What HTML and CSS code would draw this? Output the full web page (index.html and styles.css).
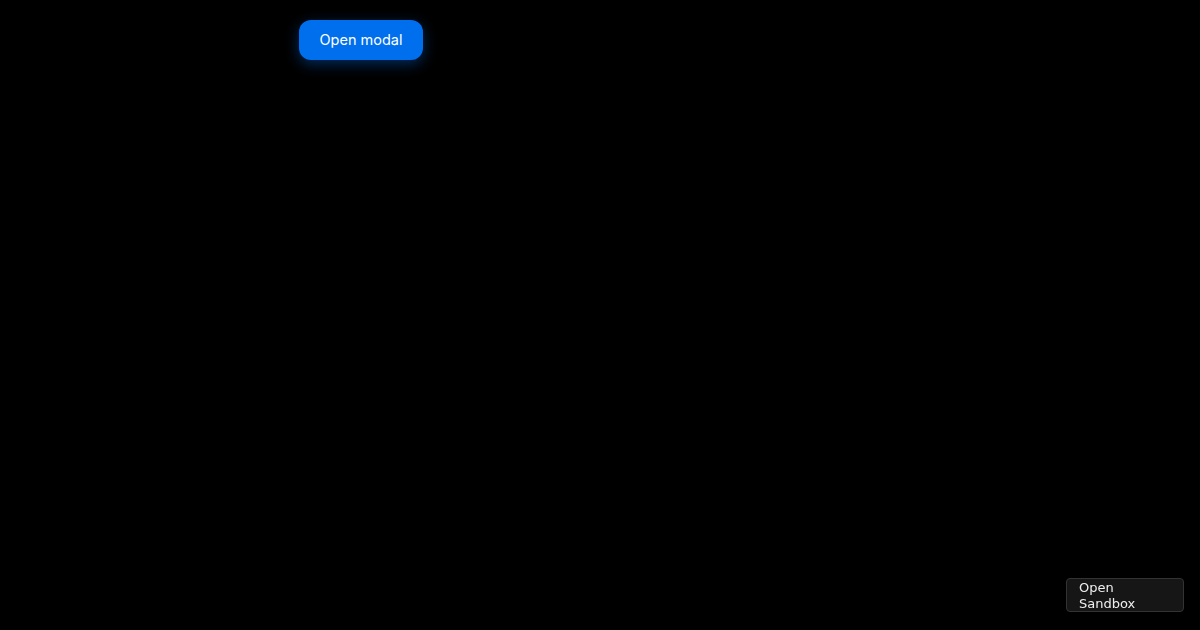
FILE: index.html
```html
<!DOCTYPE html>
<html>
<head>
<meta charset="utf-8">
<link rel="stylesheet" href="styles.css">
</head>
<body>
<main class="page">
  <button class="open-modal">Open modal</button>
</main>
<button class="sandbox">Open Sandbox</button>
</body>
</html>
```
FILE: styles.css
```css
html, body {
  margin: 0;
  padding: 0;
  background: #000;
  height: 100%;
}
.page {
  padding: 20px 0 0 299px;
}
.open-modal {
  width: 124px;
  height: 40px;
  border: none;
  border-radius: 12px;
  background: #006FEE;
  color: #fff;
  font-family: Inter, "Noto Sans", sans-serif;
  font-size: 14.5px;
  padding: 0 0 2px 0;
  box-shadow: 0 4px 14px 0 rgba(0, 111, 238, 0.4);
  cursor: pointer;
}
.sandbox {
  position: fixed;
  right: 16px;
  bottom: 18px;
  width: 118px;
  height: 34px;
  box-sizing: border-box;
  background: #161616;
  border: 1px solid #333;
  border-radius: 4px;
  color: #eee;
  font-family: "DejaVu Sans", sans-serif;
  font-size: 13px;
  line-height: 16px;
  text-align: left;
  padding: 1px 12px 0;
}
```
